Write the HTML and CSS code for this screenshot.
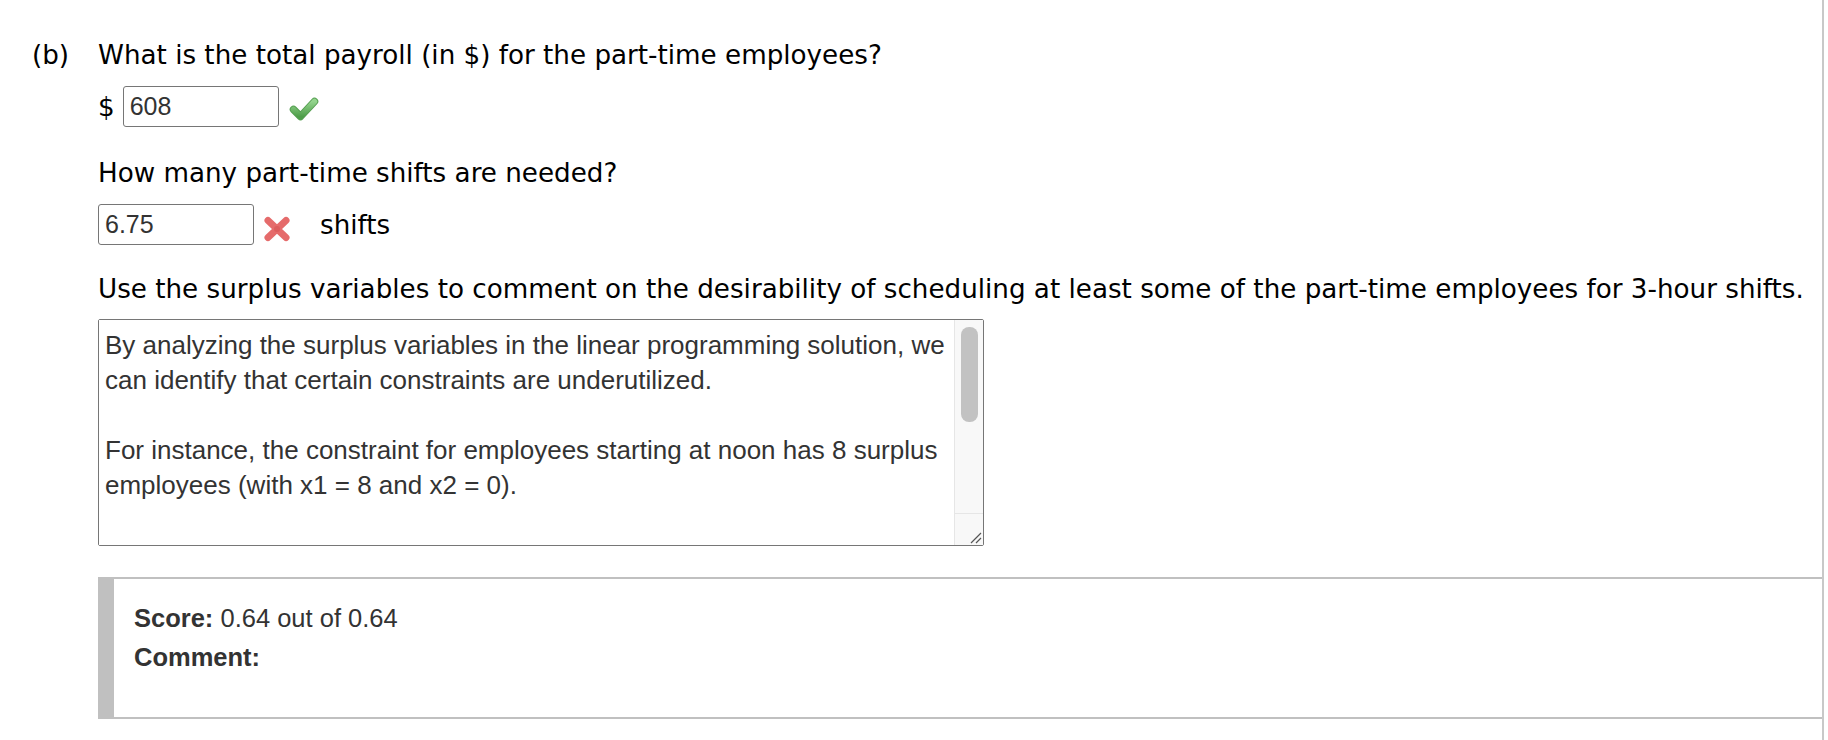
FILE: index.html
```html
<!DOCTYPE html>
<html lang="en">
<head>
  <meta charset="UTF-8">
  <title>Question part (b)</title>
  <link rel="stylesheet" href="styles.css">
</head>
<body>
  <div class="page">
    <div class="part">
      <div class="part-label">(b)</div>
      <div class="part-body">
        <p class="prompt">What is the total payroll (in $) for the part-time employees?</p>

        <div class="answer-row first">
          <span class="unit-pre">$</span>
          <input class="answer" type="text" value="608" readonly>
          <svg class="mark check" width="30" height="26" viewBox="0 0 30 26">
            <defs>
              <linearGradient id="gCheck" x1="0" y1="0" x2="0" y2="1">
                <stop offset="0" stop-color="#93d48d"/>
                <stop offset="1" stop-color="#4f9e4a"/>
              </linearGradient>
            </defs>
            <path d="M4.5 13.5 L11.5 20.5 L25.5 5.5" fill="none" stroke="#559f50" stroke-width="7.5" stroke-linecap="round" stroke-linejoin="round"/>
            <path d="M4.5 13.5 L11.5 20.5 L25.5 5.5" fill="none" stroke="url(#gCheck)" stroke-width="5.5" stroke-linecap="round" stroke-linejoin="round"/>
          </svg>
        </div>

        <p class="prompt second">How many part-time shifts are needed?</p>

        <div class="answer-row">
          <input class="answer" type="text" value="6.75" readonly>
          <svg class="mark cross" width="28" height="26" viewBox="0 0 28 26">
            <path d="M5 4.5 L23 21.5 M23 4.5 L5 21.5" stroke="#e56b6b" stroke-width="7" stroke-linecap="round"/>
            <circle cx="14" cy="13" r="3" fill="#d65454" opacity="0.6"/>
          </svg>
          <span class="unit-post">shifts</span>
        </div>

        <p class="prompt third">Use the surplus variables to comment on the desirability of scheduling at least some of the part-time employees for 3-hour shifts.</p>

        <div class="essay-box">
          <textarea class="essay" readonly>By analyzing the surplus variables in the linear programming solution, we can identify that certain constraints are underutilized.

For instance, the constraint for employees starting at noon has 8 surplus employees (with x1 = 8 and x2 = 0).</textarea>
          <div class="scrollbar">
            <div class="scroll-track"><div class="scroll-thumb"></div></div>
            <div class="scroll-corner">
              <svg width="14" height="14" viewBox="0 0 14 14">
                <path d="M3 13 L13 3 M8 13 L13 8" stroke="#555" stroke-width="1.2"/>
              </svg>
            </div>
          </div>
        </div>

        <div class="score-box">
          <p><b>Score:</b> 0.64 out of 0.64</p>
          <p><b>Comment:</b></p>
        </div>
      </div>
    </div>
  </div>
</body>
</html>
```

FILE: styles.css
```css
body {
  margin: 0;
  font-family: "DejaVu Sans", Verdana, sans-serif;
  color: #000;
  background: #fff;
}

.page {
  width: 1824px;
  min-height: 740px;
  border-right: 2px solid #c8c8c8;
  padding-top: 40px;
  box-sizing: border-box;
}

.part { display: flex; }
.part-label { width: 98px; box-sizing: border-box; padding-left: 32px; font-size: 26.2px; line-height: 30px; }
.part-body { flex: 1; }

.prompt { margin: 0; font-size: 26.2px; line-height: 30px; white-space: nowrap; }
.prompt.second { margin-top: 31px; }
.prompt.third { margin-top: 29px; }

.answer-row { display: flex; align-items: center; margin-top: 16px; height: 41px; }
.unit-pre { font-size: 26.2px; margin-right: 8px; }
.unit-post { font-size: 26.2px; margin-left: 29px; }

.answer {
  width: 156px;
  height: 41px;
  box-sizing: border-box;
  border: 1.5px solid #767676;
  border-radius: 3px;
  padding: 0 6px;
  font-family: "Liberation Sans", Arial, sans-serif;
  font-size: 25px;
  color: #333;
  background: #fff;
}

.mark.check { margin-left: 10px; margin-top: 5px; }
.mark.cross { margin-left: 9px; margin-top: 8px; }

.essay-box {
  display: flex;
  margin-top: 15px;
  width: 886px;
  height: 227px;
  box-sizing: border-box;
  border: 1.5px solid #767676;
  border-radius: 2px;
}

.essay {
  flex: 1;
  border: 0;
  outline: none;
  margin: 0;
  padding: 8px 6px;
  font-family: "Liberation Sans", Arial, sans-serif;
  font-size: 26px;
  line-height: 35px;
  color: #333;
  resize: none;
  overflow: hidden;
}

.scrollbar {
  width: 28px;
  display: flex;
  flex-direction: column;
  background: #f8f8f8;
  border-left: 1px solid #e6e6e6;
}
.scroll-track { flex: 1; padding: 7px 5px 0 6px; }
.scroll-thumb { height: 95px; background: #c2c2c2; border-radius: 8px; }
.scroll-corner {
  height: 30px;
  border-top: 1px solid #e6e6e6;
  display: flex;
  align-items: flex-end;
  justify-content: flex-end;
  padding: 0 1px 1px 0;
}

.score-box {
  margin-top: 31px;
  height: 142px;
  box-sizing: border-box;
  border-top: 2px solid #c0c0c0;
  border-bottom: 2px solid #c0c0c0;
  border-left: 16px solid #c0c0c0;
  padding: 20px 20px 0;
  font-family: "Liberation Sans", Arial, sans-serif;
  font-size: 25.5px;
  color: #333;
}
.score-box p { margin: 0; line-height: 39px; }
```
